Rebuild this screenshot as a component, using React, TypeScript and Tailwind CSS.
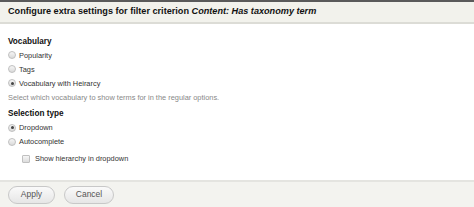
import React from "react";

function Radio({ checked }: { checked?: boolean }) {
  return (
    <span className="inline-flex h-[8px] w-[8px] shrink-0 items-center justify-center rounded-full border border-[#c0c0c0] bg-gradient-to-b from-[#f6f6f6] to-[#dadada]">
      {checked && <span className="h-[3px] w-[3px] rounded-full bg-[#444]" />}
    </span>
  );
}

function RadioRow({ label, checked }: { label: string; checked?: boolean }) {
  return (
    <div className="flex h-[14px] items-center gap-[3px]">
      <Radio checked={checked} />
      <span>{label}</span>
    </div>
  );
}

export default function App() {
  return (
    <div
      className="flex h-[207px] w-[474px] flex-col bg-white text-[7.4px] text-[#333]"
      style={{ fontFamily: '"Liberation Sans", Arial, sans-serif' }}
    >
      <div className="h-[2px] bg-[#5a5a5a]" />
      <div className="flex h-[22px] items-center border-b-2 border-[#dcdcd6] bg-[#f2f2ec] px-[8px] text-[9.15px] font-bold text-[#111]">
        Configure extra settings for filter criterion&nbsp;<em>Content: Has taxonomy term</em>
      </div>
      <div className="flex-1 px-[8px] pt-[12px]">
        <div className="text-[8.2px] font-bold text-[#111]">Vocabulary</div>
        <RadioRow label="Popularity" />
        <RadioRow label="Tags" />
        <RadioRow label="Vocabulary with Heirarcy" checked />
        <div className="flex h-[15px] items-center text-[#888]">
          Select which vocabulary to show terms for in the regular options.
        </div>
        <div className="mt-[3px] text-[8.2px] font-bold text-[#111]">Selection type</div>
        <RadioRow label="Dropdown" checked />
        <RadioRow label="Autocomplete" />
        <div className="mt-[3px] flex h-[14px] items-center gap-[5px] pl-[14px]">
          <span className="h-[8px] w-[8px] rounded-[1px] border border-[#c0c0c0] bg-gradient-to-b from-[#f6f6f6] to-[#dcdcdc]" />
          <span>Show hierarchy in dropdown</span>
        </div>
      </div>
      <div className="flex h-[27px] items-center gap-[9px] border-t-2 border-[#e4e4e0] bg-[#f3f3ef] px-[8px]">
        <button className="h-[18px] w-[47px] rounded-full border border-[#c8c8c8] bg-gradient-to-b from-[#fafafa] to-[#e6e6e6] text-[8.5px] text-[#555]">
          Apply
        </button>
        <button className="h-[18px] w-[50px] rounded-full border border-[#c8c8c8] bg-gradient-to-b from-[#fafafa] to-[#e6e6e6] text-[8.5px] text-[#555]">
          Cancel
        </button>
      </div>
    </div>
  );
}
